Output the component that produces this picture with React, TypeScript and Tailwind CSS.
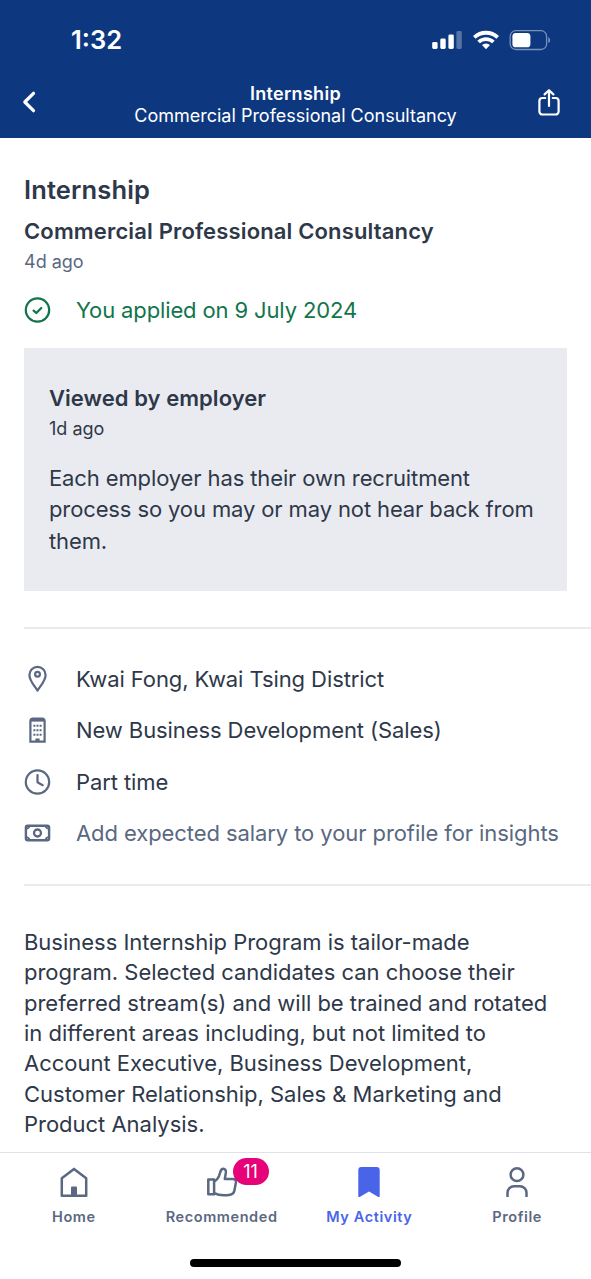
import React from "react";

function StatusBar() {
  return (
    <div className="flex h-[78px] items-center justify-between pl-[71px] pr-[39px] pt-px text-white">
      <span className="text-[25.5px] font-semibold leading-[30px]">1:32</span>
      <div className="flex items-center">
        <svg width="30" height="20" viewBox="0 0 30 20" fill="currentColor">
          <rect x="0.2" y="12" width="5.4" height="7" rx="1.4" />
          <rect x="8.3" y="8.6" width="5.4" height="10.4" rx="1.4" />
          <rect x="16.4" y="4.6" width="5.4" height="14.4" rx="1.4" />
          <rect x="24.4" y="1" width="5.4" height="18" rx="1.4" opacity="0.3" />
        </svg>
        <svg className="ml-[11px]" width="26" height="20" viewBox="0 0 26 20" fill="none" stroke="currentColor" strokeWidth="3.8">
          <path d="M1.3 7.4a17 17 0 0 1 23.4 0" />
          <path d="M5.6 12a10.7 10.7 0 0 1 14.8 0" />
          <path d="M13 19.2l-4-4.1a5.8 5.8 0 0 1 8 0z" fill="currentColor" stroke="none" />
        </svg>
        <svg className="ml-[10px]" width="43" height="22" viewBox="0 0 43 22" fill="none">
          <rect x="1.2" y="1.7" width="36.4" height="18.8" rx="5.6" stroke="white" strokeOpacity="0.45" strokeWidth="1.3" />
          <rect x="3.4" y="3.9" width="18" height="14.4" rx="3.4" fill="white" />
          <path d="M39.4 8.2c2.2.9 2.2 4.9 0 5.8z" fill="white" fillOpacity="0.5" />
        </svg>
      </div>
    </div>
  );
}

function Header() {
  return (
    <header className="h-[138px] shrink-0 bg-[#0d387f]">
      <StatusBar />
      <div className="flex items-start justify-between pl-[22px] pr-[31px] text-white">
        <div className="w-[31px] pt-[13px]">
          <svg width="14" height="22" viewBox="0 0 14 22" fill="none" stroke="currentColor" strokeWidth="3.2" strokeLinecap="round" strokeLinejoin="round">
            <path d="M11.5 2.3 2.8 11l8.7 8.7" />
          </svg>
        </div>
        <div className="mt-[5px] text-center text-[18px] leading-[22px]">
          <div className="font-semibold tracking-[0.3px]">Internship</div>
          <div>Commercial Professional Consultancy</div>
        </div>
        <svg className="mt-[10px]" width="22" height="28" viewBox="0 0 22 28" fill="none" stroke="currentColor" strokeWidth="2.2" strokeLinecap="round" strokeLinejoin="round">
          <path d="M7.2 10H4.4A3 3 0 0 0 1.4 13v10.5a3 3 0 0 0 3 3h13.2a3 3 0 0 0 3-3V13a3 3 0 0 0-3-3h-2.8" />
          <path d="M11 18V2.4M6.6 6.4 11 2.2l4.4 4.2" />
        </svg>
      </div>
    </header>
  );
}

function Detail({ icon, children, muted }: { icon: React.ReactNode; children: React.ReactNode; muted?: boolean }) {
  return (
    <div className="flex h-[51.5px] items-center gap-[25px]">
      <svg className="shrink-0 text-[#5a6881]" width="27" height="28" viewBox="0 0 27 28" fill="none" stroke="currentColor" strokeWidth="2.2">
        {icon}
      </svg>
      <span className={muted ? "whitespace-nowrap pt-px tracking-[-0.08px] text-[#5a6881]" : "whitespace-nowrap pt-px tracking-[-0.09px]"}>{children}</span>
    </div>
  );
}

const pinIcon = (
  <>
    <path d="M13.5 25.6C10.5 20.8 5.4 15.6 5.4 9.9a8.1 8.1 0 0 1 16.2 0c0 5.7-5.1 10.9-8.1 15.7z" strokeLinejoin="round" />
    <circle cx="13.5" cy="9.2" r="2.4" />
  </>
);

const buildingIcon = (
  <>
    <path d="M6.4 25.6V5a2.300 2.300 0 0 1 2.300-2.300h9.600A2.300 2.300 0 0 1 20.600 5v20.600z" />
    <path d="M6.4 4.200h14.200" strokeWidth="2.800" />
    <path d="M9.4 9.800h2m1.100 0h2m1.100 0h2M9.400 14.300h2m1.100 0h2m1.100 0h2M9.400 18.800h2m1.100 0h2m1.100 0h2" strokeWidth="2" />
    <path d="M11.4 24h4.200" strokeWidth="3" />
  </>
);

const clockIcon = (
  <>
    <circle cx="13.5" cy="14" r="11.7" />
    <path d="M13.5 7v7.300l5.200 2.900" strokeLinecap="round" strokeLinejoin="round" />
  </>
);

const cashIcon = (
  <>
    <rect x="1.9" y="6.7" width="23.2" height="14.6" rx="1.8" strokeWidth="2.4" />
    <circle cx="13.5" cy="14" r="3.5" strokeWidth="2.3" />
    <path d="M2 9.800a3.600 3.600 0 0 0 3.500-3.100M25 9.800a3.600 3.600 0 0 1-3.500-3.100M2 18.200a3.600 3.600 0 0 1 3.500 3.100M25 18.200a3.600 3.600 0 0 0-3.500 3.100" strokeWidth="1.8" />
  </>
);

function Tab({ label, icon, active, badge }: { label: string; icon: React.ReactNode; active?: boolean; badge?: string }) {
  return (
    <div className={active ? "flex flex-1 flex-col items-center pt-[14px] text-[#4964e9]" : "flex flex-1 flex-col items-center pt-[14px] text-[#5a6881]"}>
      <div className="relative">
        <svg width="30" height="30" viewBox="0 0 30 30" fill="none" stroke="currentColor" strokeWidth="2.5">
          {icon}
        </svg>
        {badge && (
          <span className="absolute left-[26px] top-[-9px] flex h-[27px] w-[36px] items-center justify-center rounded-full bg-[#e60278] text-[18px] leading-none text-white">
            {badge}
          </span>
        )}
      </div>
      <span className="mt-[9.5px] whitespace-nowrap text-[14.5px] font-semibold leading-[20px] tracking-[0.6px]">{label}</span>
    </div>
  );
}

export default function App() {
  return (
    <div className="flex h-[1279px] w-[591px] flex-col overflow-hidden bg-white font-[Inter,sans-serif] text-[22px] text-[#2e3849]">
      <Header />
      <main className="h-[1014px] shrink-0 pl-[24px]">
        <h1 className="mt-[36px] text-[25.5px] font-semibold leading-[32px] tracking-[0.15px]">Internship</h1>
        <h2 className="mt-[10px] font-semibold leading-[30px] tracking-[0.15px]">Commercial Professional Consultancy</h2>
        <div className="mt-[5px] text-[18px] leading-[22px] text-[#5a6881]">4d ago</div>
        <div className="mt-[23px] flex h-[28px] items-center gap-[25px] text-[#11754c]">
          <svg width="27" height="28" viewBox="0 0 27 28" fill="none" stroke="currentColor" strokeWidth="2.2" strokeLinecap="round" strokeLinejoin="round">
            <circle cx="13.5" cy="14" r="11.7" />
            <path d="m9.6 14.600 2.700 2.400 5-5" />
          </svg>
          <span className="tracking-[-0.13px]">You applied on 9 July 2024</span>
        </div>

        <section className="mr-[24px] mt-[24px] h-[242.5px] bg-[#eaebf1] px-[25px] pt-[35px]">
          <h3 className="font-semibold leading-[30px] tracking-[0.05px]">Viewed by employer</h3>
          <div className="mt-[5px] text-[18px] leading-[22px]">1d ago</div>
          <p className="mt-[22.5px] whitespace-nowrap leading-[31.5px] tracking-[-0.12px]">
            Each employer has their own recruitment
            <br />
            process so you may or may not hear back from
            <br />
            them.
          </p>
        </section>

        <section className="mt-[36.5px] h-[257px] border-t-2 border-[#eaebf0] pt-[24px]">
          <Detail icon={pinIcon}>Kwai Fong, Kwai Tsing District</Detail>
          <Detail icon={buildingIcon}>New Business Development (Sales)</Detail>
          <Detail icon={clockIcon}>Part time</Detail>
          <Detail icon={cashIcon} muted>Add expected salary to your profile for insights</Detail>
        </section>

        <p className="whitespace-nowrap border-t-2 border-[#eaebf0] pt-[41px] leading-[30.35px] tracking-[-0.02px]">
          Business Internship Program is tailor-made
          <br />
          program. Selected candidates can choose their
          <br />
          preferred stream(s) and will be trained and rotated
          <br />
          in different areas including, but not limited to
          <br />
          Account Executive, Business Development,
          <br />
          Customer Relationship, Sales &amp; Marketing and
          <br />
          Product Analysis.
        </p>
      </main>

      <nav className="flex h-[107px] shrink-0 border-t border-[#dfe2e8]">
        <Tab
          label="Home"
          icon={
            <>
              <path d="M2.800 28.700V11.300L15 1.900l12.200 9.400v17.400z" strokeLinejoin="round" />
              <path d="M12 29v-8.500a1 1 0 0 1 1-1h4a1 1 0 0 1 1 1V29z" fill="currentColor" stroke="none" />
            </>
          }
        />
        <Tab
          label="Recommended"
          badge="11"
          icon={
            <>
              <path d="M1.300 12.600h5.800v14.600H1.300z" strokeLinejoin="round" />
              <path d="M7.100 14.500c3.300-1.600 4.800-4.200 5.800-8.300.6-2.500 1.500-4.500 3.300-4.500 2.200 0 2.900 1.800 2.600 4.200l-1 6h7.800c2.400 0 3.700 1.500 3.300 3.800l-1.600 8.400c-.4 2-1.900 3.200-4 3.600-4.600.9-11.600.8-16.200-1.500" strokeLinejoin="round" />
            </>
          }
        />
        <Tab active label="My Activity" icon={<path d="M4.300 3a3 3 0 0 1 3-3h15.400a3 3 0 0 1 3 3v26.300c0 .8-.8 1-1.400.6L15 24.400l-9.300 5.500c-.6.4-1.400.2-1.400-.6z" fill="currentColor" stroke="none" />} />
        <Tab
          label="Profile"
          icon={
            <>
              <circle cx="15" cy="7.700" r="6.400" />
              <path d="M5.500 30v-4.200a6.500 6.500 0 0 1 6.500-6.500h6a6.500 6.500 0 0 1 6.500 6.500V30" />
            </>
          }
        />
      </nav>
      <div className="mx-auto h-[8px] w-[211px] shrink-0 rounded-full bg-black" />
    </div>
  );
}
